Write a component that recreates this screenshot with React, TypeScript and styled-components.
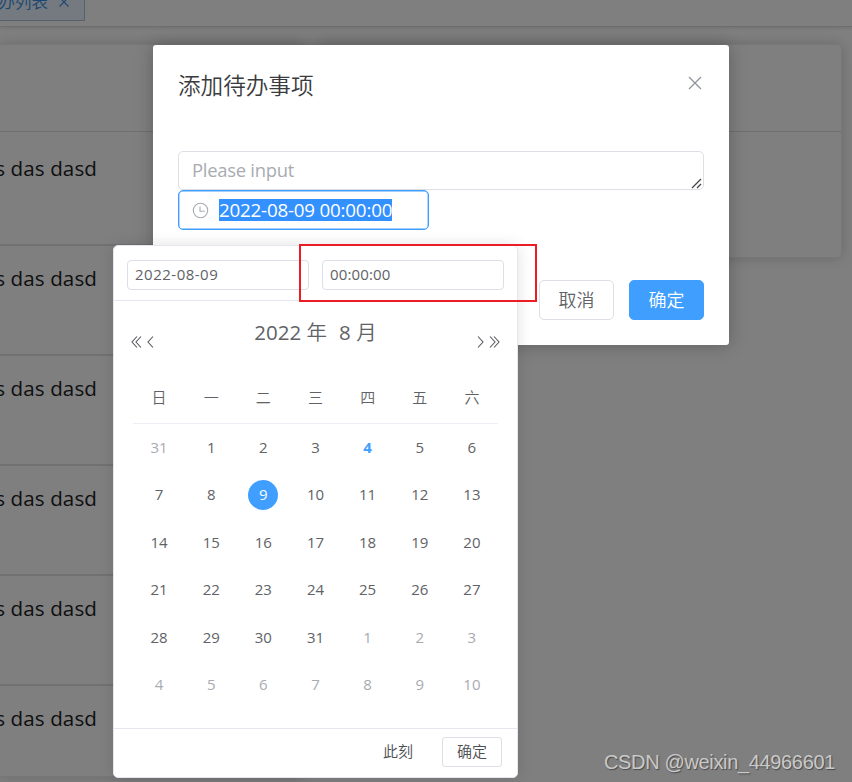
import React from "react";
import styled, { createGlobalStyle } from "styled-components";

const GlobalStyle = createGlobalStyle`
  * { box-sizing: border-box; }
  html, body { margin: 0; padding: 0; height: 782px; overflow: hidden; background: #fff; }
  body { font-family: "Open Sans", "Noto Sans", "Noto Sans CJK SC", sans-serif; color: #606266; }
  button, input { font-family: inherit; }
`;

const Screen = styled.div`
  position: relative;
  width: 852px;
  height: 782px;
  overflow: hidden;
`;

const TabBar = styled.header`
  display: flex;
  align-items: flex-start;
  height: 27px;
  background: #fff;
  border-bottom: 1px solid #d8dce5;
  box-shadow: 0 1px 4px rgba(0, 0, 0, 0.12);
`;

const Tab = styled.div`
  display: flex;
  align-items: center;
  justify-content: flex-end;
  gap: 11px;
  width: 85px;
  height: 37px;
  margin-top: -16px;
  padding: 0 15px 1px 0;
  background: #e8f4ff;
  border: 1px solid #a8c4dc;
  border-left: 0;
  color: #3a8ee6;
  font-size: 16.5px;
  font-weight: 350;
  white-space: nowrap;
`;

const TabLabel = styled.span`
  line-height: 20px;
`;

const TabClose = styled.svg`
  flex: none;
  width: 10px;
  height: 10px;
`;

const Columns = styled.main`
  display: grid;
  grid-template-columns: 303px 522px;
  gap: 17px;
  align-items: start;
  padding-top: 17px;
`;

const Card = styled.section<{ $left?: boolean }>`
  height: ${(p) => (p.$left ? "733px" : "214px")};
  border: 1px solid #ebeef5;
  border-left-width: ${(p) => (p.$left ? 0 : 1)}px;
  border-radius: ${(p) => (p.$left ? "0 4px 4px 0" : "4px")};
  background: #fff;
  box-shadow: 0 0 14px rgba(0, 0, 0, 0.18);
`;

const CardHeader = styled.div`
  height: 87px;
  border-bottom: 1px solid #dcdfe6;
`;

const TodoRow = styled.div<{ $first?: boolean }>`
  height: ${(p) => (p.$first ? 114 : 110)}px;
  padding-top: ${(p) => (p.$first ? 19 : 15)}px;
  border-bottom: 2px solid #e2e2e4;
  color: #202124;
  font-size: 20.6px;
  line-height: 34px;
  letter-spacing: 0.1px;
  white-space: nowrap;

  &:last-child {
    height: 89px;
    border-bottom: 0;
  }
`;

const TodoText = styled.div`
  width: 97px;
  display: flex;
  justify-content: flex-end;
`;

const Overlay = styled.div`
  position: absolute;
  inset: 0;
  background: rgba(0, 0, 0, 0.5);
`;

const Dialog = styled.section`
  position: absolute;
  left: 153px;
  top: 45px;
  width: 576px;
  height: 300px;
  padding: 20px 25px 25px;
  display: flex;
  flex-direction: column;
  background: #fff;
  border-radius: 3px;
  box-shadow: 0 0 18px rgba(0, 0, 0, 0.25);
`;

const DialogHead = styled.div`
  display: flex;
  justify-content: space-between;
  height: 86px;
`;

const DialogTitle = styled.h2`
  margin: 0;
  font-size: 22.6px;
  font-weight: 350;
  line-height: 41px;
  color: #3a3b3e;
`;

const CloseIcon = styled.svg`
  margin: 11px 2px 0 0;
  width: 14px;
  height: 14px;
`;

const TextareaBox = styled.div`
  display: flex;
  justify-content: space-between;
  height: 39px;
  padding: 0 0 0 13px;
  border: 1px solid #dcdfe6;
  border-radius: 5px;
  color: #a8abb2;
  font-size: 18.4px;
  line-height: 36px;
  letter-spacing: -0.25px;
`;

const Grip = styled.svg`
  align-self: flex-end;
  width: 12px;
  height: 12px;
`;

const DateField = styled.div`
  display: flex;
  align-items: center;
  gap: 10px;
  width: 251px;
  height: 40px;
  padding-left: 13px;
  border: 1px solid #409eff;
  box-shadow: inset 0 0 0 0.4px #409eff;
  border-radius: 5px;
`;

const Selected = styled.span`
  height: 22px;
  width: 173px;
  background: #3390ff;
  color: #fff;
  font-size: 18.8px;
  line-height: 22px;
  letter-spacing: -0.21px;
  white-space: nowrap;
`;

const DialogActions = styled.div`
  display: flex;
  justify-content: flex-end;
  gap: 15px;
  margin-top: auto;
`;

const DialogButton = styled.button<{ $primary?: boolean }>`
  width: 75px;
  height: 40px;
  padding: 0 0 2px;
  border: 1px solid ${(p) => (p.$primary ? "#409eff" : "#dcdfe6")};
  border-radius: 5px;
  background: ${(p) => (p.$primary ? "#409eff" : "#fff")};
  color: ${(p) => (p.$primary ? "#fff" : "#606266")};
  font-size: 18px;
  font-weight: 350;
`;

const Picker = styled.section`
  position: absolute;
  left: 113px;
  top: 245px;
  width: 405px;
  height: 533px;
  display: flex;
  flex-direction: column;
  background: #fff;
  border: 1px solid #e4e7ed;
  border-radius: 5px;
  box-shadow: 0 0 15px rgba(0, 0, 0, 0.12);
`;

const TimeBar = styled.div`
  display: flex;
  gap: 13px;
  height: 55px;
  padding: 14px 13px 0;
  border-bottom: 1px solid #e4e7ed;
`;

const SmallField = styled.div`
  width: 182px;
  height: 30px;
  padding-left: 7px;
  border: 1px solid #dcdfe6;
  border-radius: 4px;
  font-size: 15px;
  line-height: 27px;
`;

const FieldValue = styled.span<{ $track: number }>`
  letter-spacing: ${(p) => p.$track}px;
`;

const MonthBar = styled.div`
  display: flex;
  justify-content: space-between;
  align-items: flex-start;
  height: 73px;
  padding: 15px 17px 0;
`;

const MonthLabel = styled.div`
  display: flex;
  gap: 12px;
  font-size: 20.5px;
  line-height: 33px;
  color: #606266;
`;

const Unit = styled.span`
  font-weight: 350;
`;

const Arrows = styled.div`
  display: flex;
  gap: 5px;
  padding-top: 20px;
`;

const Chevron = styled.svg`
  height: 12px;
  fill: none;
  stroke: #55585d;
  stroke-width: 1.1;
`;

const Weekdays = styled.div`
  display: grid;
  grid-template-columns: repeat(7, 1fr);
  height: 50px;
  margin: 0 19px;
  border-bottom: 1px solid #ebeef5;
  text-align: center;
  font-size: 15px;
  font-weight: 350;
  line-height: 46px;
`;

const Days = styled.div`
  display: grid;
  grid-template-columns: repeat(7, 1fr);
  grid-auto-rows: 47.5px;
  margin: 0 19px;
`;

const DayCell = styled.div`
  display: flex;
  align-items: center;
  justify-content: center;
`;

type Kind = "normal" | "other" | "today" | "picked";

const Day = styled.span<{ $kind: Kind }>`
  width: 30px;
  height: 30px;
  border-radius: 50%;
  text-align: center;
  font-size: 15px;
  line-height: 29px;
  font-weight: ${(p) => (p.$kind === "today" ? 700 : p.$kind === "picked" ? 500 : 400)};
  background: ${(p) => (p.$kind === "picked" ? "#409eff" : "transparent")};
  color: ${(p) =>
    ({ normal: "#606266", other: "#a8abb2", today: "#409eff", picked: "#fff" })[p.$kind]};
`;

const PickerFooter = styled.div`
  display: flex;
  align-items: flex-start;
  justify-content: flex-end;
  height: 49px;
  margin-top: auto;
  padding: 8px 15px 0;
  border-top: 1px solid #e4e7ed;
`;

const FooterButton = styled.button<{ $outlined?: boolean }>`
  width: ${(p) => (p.$outlined ? 60 : 88)}px;
  height: 30px;
  padding: 0 0 3px;
  border: 1px solid ${(p) => (p.$outlined ? "#dcdfe6" : "transparent")};
  border-radius: 3px;
  background: transparent;
  color: #4c4e52;
  font-size: 15px;
  font-weight: 350;
`;

const Highlight = styled.div`
  position: absolute;
  left: 299px;
  top: 244px;
  width: 238px;
  height: 58px;
  border: 2px solid #ed1c24;
`;

const Watermark = styled.div`
  position: absolute;
  right: 17px;
  bottom: 6px;
  font-family: "Liberation Sans", sans-serif;
  font-size: 20px;
  line-height: 28px;
  letter-spacing: -0.34px;
  color: #c9c9c9;
  text-shadow: 1px 1px 1px rgba(40, 40, 40, 0.6);
  white-space: nowrap;
`;

const weekdays = ["日", "一", "二", "三", "四", "五", "六"];

const days: { n: number; kind: Kind }[] = Array.from({ length: 42 }, (_, i) => {
  if (i === 0) return { n: 31, kind: "other" };
  if (i > 31) return { n: i - 31, kind: "other" };
  return { n: i, kind: i === 4 ? "today" : i === 9 ? "picked" : "normal" };
});

export default function App() {
  return (
    <>
      <GlobalStyle />
      <Screen>
        <TabBar>
          <Tab>
            <TabLabel>办列表</TabLabel>
            <TabClose viewBox="0 0 10 10" fill="none" stroke="#3a8ee6" strokeWidth="1.1">
              <path d="M0.5 0.5l9 9M9.5 0.5l-9 9" />
            </TabClose>
          </Tab>
        </TabBar>
        <Columns>
          <Card $left>
            <CardHeader />
            {[0, 1, 2, 3, 4, 5].map((i) => (
              <TodoRow key={i} $first={i === 0}>
                <TodoText>s das dasd</TodoText>
              </TodoRow>
            ))}
          </Card>
          <Card>
            <CardHeader />
          </Card>
        </Columns>

        <Overlay />

        <Dialog>
          <DialogHead>
            <DialogTitle>添加待办事项</DialogTitle>
            <CloseIcon viewBox="0 0 14 14" fill="none" stroke="#909399" strokeWidth="1.3">
              <path d="M1 1l12 12M13 1L1 13" />
            </CloseIcon>
          </DialogHead>
          <TextareaBox>
            <span>Please input</span>
            <Grip viewBox="0 0 12 12" fill="none" stroke="#444" strokeWidth="1.3">
              <path d="M1 11L10 2M6 11L10 7" />
            </Grip>
          </TextareaBox>
          <DateField>
            <svg width="17" height="17" viewBox="0 0 17 17" fill="none" stroke="#a8abb2" strokeWidth="1.1">
              <circle cx="8.5" cy="8.5" r="7.2" />
              <path d="M8 4.5v4.8h4.8" />
            </svg>
            <Selected>2022-08-09 00:00:00</Selected>
          </DateField>
          <DialogActions>
            <DialogButton>取消</DialogButton>
            <DialogButton $primary>确定</DialogButton>
          </DialogActions>
        </Dialog>

        <Picker>
          <TimeBar>
            <SmallField>
              <FieldValue $track={0.5}>2022-08-09</FieldValue>
            </SmallField>
            <SmallField>
              <FieldValue $track={0.15}>00:00:00</FieldValue>
            </SmallField>
          </TimeBar>
          <MonthBar>
            <Arrows>
              <Chevron width="11" viewBox="0 0 11 12">
                <path d="M6 0.5L1 6l5 5.5M10 0.5L5 6l5 5.5" />
              </Chevron>
              <Chevron width="7" viewBox="0 0 7 12">
                <path d="M6 0.5L1 6l5 5.5" />
              </Chevron>
            </Arrows>
            <MonthLabel>
              <span>
                2022 <Unit>年</Unit>
              </span>
              <span>
                8 <Unit>月</Unit>
              </span>
            </MonthLabel>
            <Arrows>
              <Chevron width="7" viewBox="0 0 7 12">
                <path d="M1 0.5L6 6l-5 5.5" />
              </Chevron>
              <Chevron width="11" viewBox="0 0 11 12">
                <path d="M1 0.5L6 6l-5 5.5M5 0.5L10 6l-5 5.5" />
              </Chevron>
            </Arrows>
          </MonthBar>
          <Weekdays>
            {weekdays.map((w) => (
              <span key={w}>{w}</span>
            ))}
          </Weekdays>
          <Days>
            {days.map((d, i) => (
              <DayCell key={i}>
                <Day $kind={d.kind}>{d.n}</Day>
              </DayCell>
            ))}
          </Days>
          <PickerFooter>
            <FooterButton>此刻</FooterButton>
            <FooterButton $outlined>确定</FooterButton>
          </PickerFooter>
        </Picker>

        <Highlight />
        <Watermark>CSDN @weixin_44966601</Watermark>
      </Screen>
    </>
  );
}
